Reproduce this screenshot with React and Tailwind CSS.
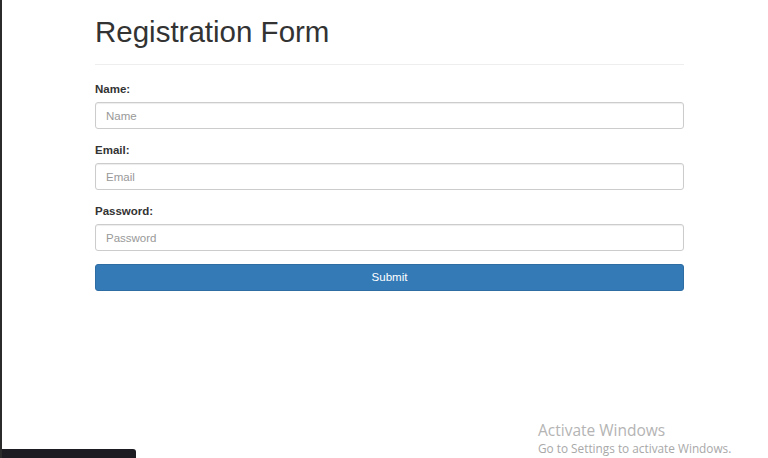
import React from "react";

export default function App() {
  const font = { fontFamily: '"Liberation Sans", Arial, Helvetica, sans-serif' };
  const fields = [
    { label: "Name:", ph: "Name", type: "text" },
    { label: "Email:", ph: "Email", type: "email" },
    { label: "Password:", ph: "Password", type: "password" },
  ];
  return (
    <div
      className="relative w-[768px] h-[458px] overflow-hidden bg-white border-l-2 border-[#2b2b2b] text-[#333]"
      style={font}
    >
      <div className="ml-[93px] w-[589px]">
        <h1 className="pt-[16px] pb-[16px] text-[29.5px] leading-[32px] font-normal text-[#333] border-b border-[#eee]">
          Registration Form
        </h1>
        <form className="mt-[16px] flex flex-col">
          {fields.map((f) => (
            <div key={f.label} className="mb-[13px] flex flex-col">
              <label className="text-[11.5px] leading-[16px] font-bold mb-[5px] text-[#333]">
                {f.label}
              </label>
              <input
                type={f.type}
                placeholder={f.ph}
                className="h-[27px] w-full px-[10px] text-[11.5px] text-[#555] placeholder:text-[#999] border border-[#ccc] rounded-[3px] shadow-[inset_0_1px_1px_rgba(0,0,0,0.075)] outline-none"
              />
            </div>
          ))}
          <button
            type="button"
            className="h-[27px] w-full bg-[#337ab7] border border-[#2e6da4] rounded-[3px] text-white text-[11.5px]"
          >
            Submit
          </button>
        </form>
      </div>

      <div
        className="absolute left-[536px] top-[420px] text-[#b4b4b4] leading-none"
        style={{ fontFamily: '"Open Sans", "Noto Sans", sans-serif' }}
      >
        <div className="text-[15.5px] leading-[20px]">Activate Windows</div>
        <div className="text-[11.8px] leading-[16px] text-[#a8a8a8]">
          Go to Settings to activate Windows.
        </div>
      </div>

      <div className="absolute left-[-2px] bottom-0 w-[136px] h-[9px] bg-[#1c1c22] rounded-tr-[3px]" />
    </div>
  );
}
